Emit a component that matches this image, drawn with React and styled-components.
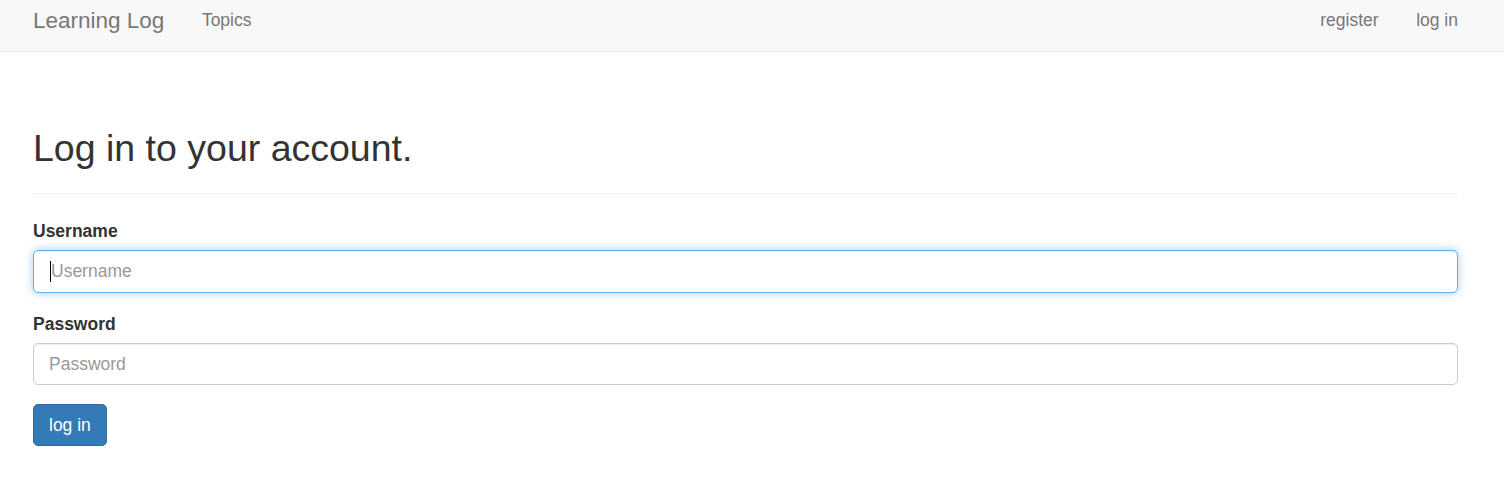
import styled, { createGlobalStyle, css } from "styled-components";

const GlobalStyle = createGlobalStyle`
    html, body{
        margin: 0;
        padding: 0;
        background: #fff;
    }
    body{
        font-family: "Liberation Sans", Arial, sans-serif;
        font-size: 17.5px;
        line-height: 25px;
        color: #333;
    }
    *{
        box-sizing: border-box;
    }
`

const App = () =>{
    return(
        <>
            <GlobalStyle />
            <Navbar>
                <NavLeft>
                    <Brand href="#">Learning Log</Brand>
                    <NavLink href="#">Topics</NavLink>
                </NavLeft>
                <NavRight>
                    <NavLink href="#">register</NavLink>
                    <NavLink href="#" $last>log in</NavLink>
                </NavRight>
            </Navbar>
            <Container>
                <PageHeader>
                    <h2>Log in to your account.</h2>
                </PageHeader>
                <form onSubmit={(e)=>e.preventDefault()}>
                    <FormGroup>
                        <Label htmlFor="username">Username</Label>
                        <InputWrap>
                            <Input id="username" type="text" placeholder="Username" $focused />
                            <Caret />
                        </InputWrap>
                    </FormGroup>
                    <FormGroup>
                        <Label htmlFor="password">Password</Label>
                        <Input id="password" type="password" placeholder="Password" />
                    </FormGroup>
                    <Button type="submit">log in</Button>
                </form>
            </Container>
        </>
    )
}

const focusStyle = css`
    border-color: #66afe9;
    box-shadow: inset 0 1px 1px rgba(0,0,0,.075), 0 0 10px rgba(102,175,233,.6);
`

const Navbar = styled.nav`
    display: flex;
    justify-content: space-between;
    align-items: flex-start;
    height: 52px;
    padding: 0 46px 0 33px;
    background-color: #f8f8f8;
    border-bottom: 1px solid #e7e7e7;
`

const NavLeft = styled.div`
    display: flex;
    align-items: center;
`

const NavRight = styled.div`
    display: flex;
    align-items: center;
`

const Brand = styled.a`
    display: block;
    padding: 8px 18.75px 0 0;
    font-size: 22.5px;
    line-height: 25px;
    color: #777;
    text-decoration: none;
`

const NavLink = styled.a`
    display: block;
    padding: 8px ${p => p.$last ? "0" : "18.75px"} 0 18.75px;
    font-size: 17.5px;
    line-height: 25px;
    color: #777;
    text-decoration: none;
    &:hover{
        color: #333;
    }
`

const Container = styled.div`
    padding: 0 46px 0 33px;
`

const PageHeader = styled.div`
    margin: 76px 0 25px;
    padding-bottom: 11.25px;
    border-bottom: 1px solid #eee;
    h2{
        margin: 0 0 12.5px;
        font-size: 37.5px;
        line-height: 41.25px;
        font-weight: 500;
        color: #333;
    }
`

const FormGroup = styled.div`
    margin-bottom: 18.75px;
`

const Label = styled.label`
    display: inline-block;
    margin-bottom: 6.25px;
    font-weight: 700;
    font-size: 17.5px;
    line-height: 25px;
`

const InputWrap = styled.div`
    position: relative;
`

const Caret = styled.span`
    position: absolute;
    left: 17px;
    top: 11px;
    width: 1px;
    height: 21px;
    background-color: #000;
`

const Input = styled.input`
    display: block;
    width: 100%;
    height: 42.5px;
    padding: 7.5px 15px 7.5px ${p => p.$focused ? "17px" : "15px"};
    font-family: "Liberation Sans", Arial, sans-serif;
    font-size: 17.5px;
    line-height: 25px;
    color: #555;
    background-color: #fff;
    border: 1px solid #ccc;
    border-radius: 5px;
    box-shadow: inset 0 1px 1px rgba(0,0,0,.075);
    outline: none;
    &::placeholder{
        color: #999;
        opacity: 1;
    }
    &:focus{
        ${focusStyle}
    }
    ${p => p.$focused && focusStyle}
`

const Button = styled.button`
    display: inline-block;
    padding: 7.5px 15px;
    font-family: "Liberation Sans", Arial, sans-serif;
    font-size: 17.5px;
    line-height: 25px;
    color: #fff;
    background-color: #337ab7;
    border: 1px solid #2e6da4;
    border-radius: 5px;
    cursor: pointer;
    &:hover{
        background-color: #286090;
    }
`

export default App;
